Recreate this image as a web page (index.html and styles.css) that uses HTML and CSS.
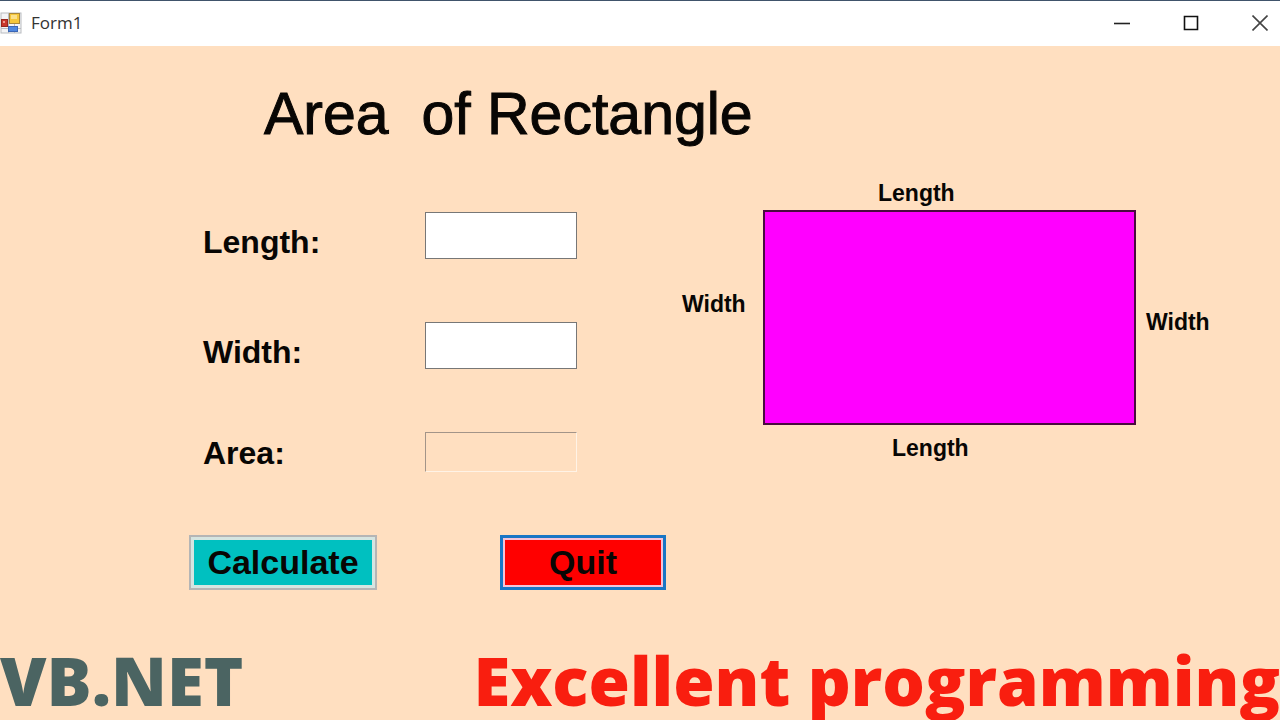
FILE: index.html
```html
<!DOCTYPE html>
<html lang="en">
<head>
<meta charset="utf-8">
<title>Form1</title>
<link rel="stylesheet" href="styles.css">
</head>
<body>
<header class="titlebar">
  <svg class="app-icon" width="22" height="22" viewBox="0 0 22 22" aria-hidden="true">
    <rect x="1" y="1" width="20" height="20" fill="#f4f4f6" stroke="#b9bcc0"/>
    <path d="M8.500 1v20M1 16.500h20M14.500 12v9" stroke="#b9bcc0"/>
    <rect x="9.500" y="1.500" width="10" height="10" fill="#f5c63a" stroke="#a8863a"/>
    <rect x="11" y="3" width="6" height="4" fill="#fbe08a"/>
    <rect x="1.500" y="7.500" width="6" height="7" fill="#c9372c" stroke="#96281f"/>
    <rect x="3" y="9" width="2" height="2" fill="#ee9a8f"/>
    <rect x="8.500" y="14.500" width="9" height="5" fill="#4f87e0" stroke="#3b66b5"/>
  </svg>
  <span class="window-name">Form1</span>
  <div class="window-buttons">
    <button class="window-button" type="button" aria-label="Minimize"><svg width="16" height="16" viewBox="0 0 16 16"><path d="M0 8.500h16" stroke="#222" stroke-width="1.600"/></svg></button>
    <button class="window-button" type="button" aria-label="Maximize"><svg width="16" height="16" viewBox="0 0 16 16"><path d="M1.500 1.500h13v13h-13z" fill="none" stroke="#111" stroke-width="1.600"/></svg></button>
    <button class="window-button" type="button" aria-label="Close"><svg width="16" height="16" viewBox="0 0 16 16"><path d="M0.500 0.500l15 15M15.500 0.500l-15 15" stroke="#444" stroke-width="1.600"/></svg></button>
  </div>
</header>
<main class="form">
  <h1 class="heading">Area  of Rectangle</h1>
  <div class="content">
    <form class="fields">
      <label class="field-label" for="length">Length:</label>
      <input class="field-box" id="length" type="text">
      <label class="field-label" for="width">Width:</label>
      <input class="field-box" id="width" type="text">
      <label class="field-label result-label" for="area">Area:</label>
      <output class="field-result" id="area"></output>
      <div class="actions">
        <button class="action calculate" type="button">Calculate</button>
        <button class="action quit" type="button">Quit</button>
      </div>
    </form>
    <section class="diagram">
      <span class="side top">Length</span>
      <span class="side left">Width</span>
      <div class="rectangle"></div>
      <span class="side right">Width</span>
      <span class="side bottom">Length</span>
    </section>
  </div>
</main>
<footer class="banner">
  <span class="product">VB.NET</span>
  <span class="channel">Excellent programming</span>
</footer>
</body>
</html>
```
FILE: styles.css
```css
* { box-sizing: border-box; }
body {
  margin: 0;
  min-height: 100vh;
  display: flex;
  flex-direction: column;
  background: #ffdfc0;
  color: #080604;
  font-family: "Liberation Sans", Arial, sans-serif;
}
.titlebar {
  display: flex;
  align-items: center;
  height: 46px;
  flex: none;
  padding-bottom: 2px;
  background: #fff;
  border-top: 1px solid #40536b;
}
.app-icon { display: block; }
.window-name {
  margin-left: 9px;
  font-family: "Open Sans", sans-serif;
  font-size: 17px;
  color: #333;
}
.window-buttons { display: flex; gap: 53px; margin-left: auto; padding-right: 12px; }
.window-button { display: flex; padding: 0; border: 0; background: none; }
.form { flex: 1; }
.heading {
  margin: 0;
  padding: 34px 0 0 264px;
  font-size: 59px;
  line-height: 68px;
  font-weight: 400;
  white-space: pre;
  -webkit-text-stroke: 1px #080604;
}
.content { display: flex; align-items: flex-start; }
.fields {
  display: grid;
  grid-template-columns: 222px 152px;
  grid-template-rows: 47px 47px 40px;
  row-gap: 63px;
  padding: 64px 0 0 203px;
}
.field-label {
  align-self: center;
  padding-top: 12px;
  font-size: 32px;
  line-height: 36px;
  font-weight: 700;
}
.result-label { padding-top: 2px; }
.field-box {
  width: 100%;
  height: 47px;
  padding: 0 8px;
  border: 1px solid #777;
  border-radius: 0;
  background: #fff;
  font: 28px "Liberation Sans", sans-serif;
}
.field-result {
  border: 1px solid;
  border-color: #a39488 #fff3e6 #fff3e6 #a39488;
}
.actions { grid-column: 1 / -1; display: flex; gap: 123px; margin-left: -14px; }
.action {
  height: 55px;
  padding: 0;
  font: 700 34px "Liberation Sans", sans-serif;
  color: #080604;
  flex: none;
}
.calculate {
  width: 188px;
  background: #00c0c0;
  border: 2px solid #b5b5b5;
  box-shadow: inset 0 0 0 3px #d5e5e1;
}
.quit {
  width: 166px;
  background: #f00;
  border: 3px solid #1976c5;
  box-shadow: inset 0 0 0 2px #f3c3d8;
}
.diagram {
  display: grid;
  grid-template-columns: 81px 373px auto;
  grid-template-rows: 34px 215px auto;
  padding: 28px 0 0 105px;
}
.side { font-size: 23px; line-height: 26px; font-weight: 700; }
.top { grid-area: 1 / 2; padding: 4px 0 0 115px; }
.left { grid-area: 2 / 1; padding-top: 81px; }
.rectangle { grid-area: 2 / 2; background: #f0f; border: 2px solid #4a0a40; }
.right { grid-area: 2 / 3; padding: 99px 0 0 10px; }
.bottom { grid-area: 3 / 2; padding: 10px 0 0 129px; }
.banner {
  display: flex;
  justify-content: space-between;
  flex: none;
  height: 74px;
  overflow: hidden;
  font-family: "Open Sans", sans-serif;
  font-size: 67px;
  line-height: 68px;
  font-weight: 800;
  white-space: nowrap;
}
.product { color: #4b6462; }
.channel { color: #f91e0f; }
```
